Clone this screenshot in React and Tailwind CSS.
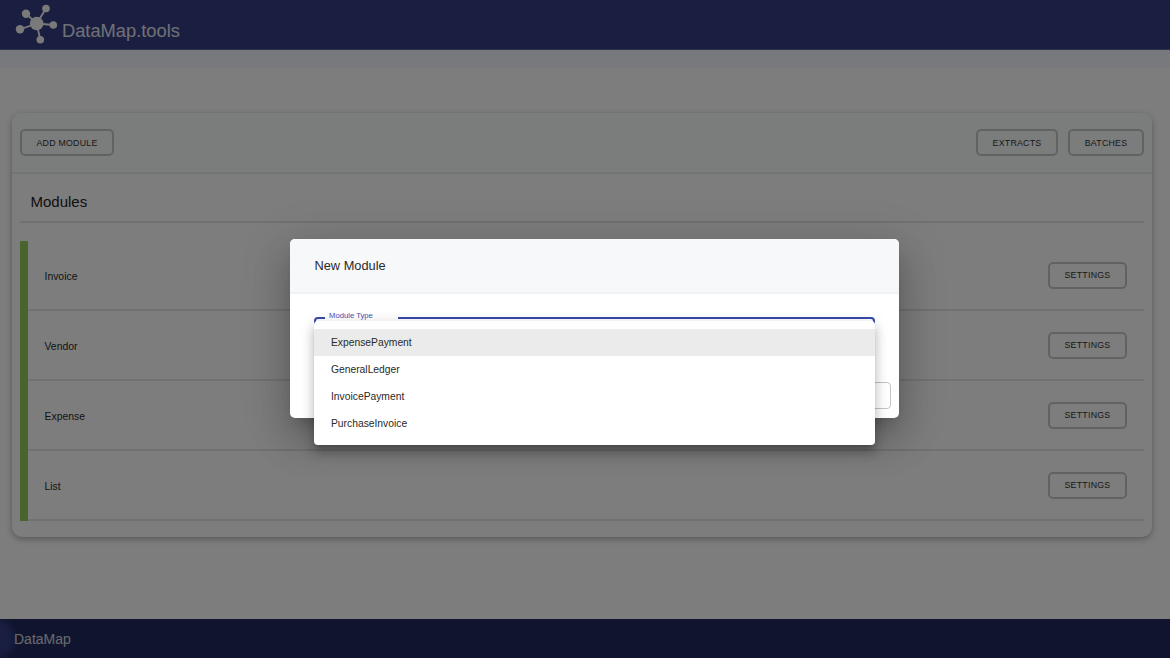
const modules = ['Invoice', 'Vendor', 'Expense', 'List'];
const moduleTypes = ['ExpensePayment', 'GeneralLedger', 'InvoicePayment', 'PurchaseInvoice'];

const outlineButton = "rounded-[5px] border-2 border-[#c4c4c4] pt-px text-[8.8px] leading-none uppercase tracking-[0.25px] text-[#333]";

function Logo() {
    const nodes = [
        [46, 8.5, 3.8],
        [26, 13.7, 4.2],
        [20, 29.3, 4.2],
        [53.3, 25, 3.8],
        [40.3, 39.7, 3.8],
    ];
    return (
        <svg width="62" height="49" viewBox="0 0 62 49" className="shrink-0" fill="#f4f4f4" stroke="#f4f4f4">
            {nodes.map(([x, y, r]) => (
                <g key={x}>
                    <line x1="36.7" y1="23.5" x2={x} y2={y} strokeWidth="1.8" />
                    <circle cx={x} cy={y} r={r} stroke="none" />
                </g>
            ))}
            <circle cx="36.7" cy="23.5" r="6.8" stroke="none" />
        </svg>
    );
}

function ModuleRow({ name }) {
    return (
        <div className="flex h-[70px] items-center justify-between border-b-2 border-[#e3e3e3] pl-[16.5px] pr-[17px]">
            <span className="pt-[4px] text-[10.4px] text-[#2a2a2a]">{name}</span>
            <button className={`${outlineButton} h-[27px] w-[79px]`}>Settings</button>
        </div>
    );
}

export default function App() {
    return (
        <div className="relative flex h-[658px] flex-col overflow-hidden bg-[#fafafa] font-['Liberation_Sans',Arial,sans-serif]">
            <header className="flex h-[50px] shrink-0 items-start border-b border-[#5a6099] bg-[#343d82]">
                <Logo />
                <span className="mt-[20px] text-[18.3px] leading-[21px] text-white/85">DataMap.tools</span>
            </header>
            <div className="h-[18px] shrink-0 bg-[#f0f2f8]" />

            <main className="flex-1 pl-3 pr-[18px] pt-[45px]">
                <section className="h-[424px] rounded-[10px] bg-[#fafafa] shadow-[0_2px_6px_rgba(0,0,0,0.3)]">
                    <div className="flex h-[61px] items-center justify-between rounded-t-[10px] border-b-2 border-[#e6e8e8] bg-[#f6f8f8] pl-2 pr-[8px]">
                        <button className={`${outlineButton} h-[27px] w-[94px]`}>Add Module</button>
                        <div className="flex gap-[10px]">
                            <button className={`${outlineButton} h-[27px] w-[82px]`}>Extracts</button>
                            <button className={`${outlineButton} h-[27px] w-[76px]`}>Batches</button>
                        </div>
                    </div>
                    <div className="px-2">
                        <div className="flex h-[49px] items-center border-b-2 border-[#e3e3e3] pl-[10.5px] pt-[9px] text-[15px] text-[#222]">Modules</div>
                        <div className="mt-[18px] border-l-8 border-[#94c95f]">
                            {modules.map(name => <ModuleRow key={name} name={name} />)}
                        </div>
                    </div>
                </section>
            </main>

            <footer className="relative h-[39px] shrink-0 overflow-hidden bg-[#20295c]">
                <div className="absolute -left-[22px] top-0 h-[39px] w-[36px] rounded-full bg-[#343d82] blur-[3px]" />
                <span className="relative block pl-[14px] text-[14px] leading-[41px] text-white/80">DataMap</span>
            </footer>

            {/* backdrop + dialog */}
            <div className="absolute inset-0 bg-black/50">
                <div className="absolute left-[290px] top-[239px] flex h-[179px] w-[609px] flex-col rounded-[5px] bg-white shadow-[0_11px_15px_-7px_rgba(0,0,0,0.2),0_24px_38px_3px_rgba(0,0,0,0.14),0_9px_46px_8px_rgba(0,0,0,0.12)]">
                    <div className="flex h-[55px] shrink-0 items-center rounded-t-[5px] border-b-2 border-[#f1f2f4] bg-[#f7f8fa] pl-[24.5px] text-[12.8px] text-[#2a2a2a]">New Module</div>
                    <div className="relative mx-6 mt-[23px] h-[48px] rounded-[4px] border-2 border-[#3849ab]">
                        <label className="absolute -top-[8px] left-[9px] w-[73px] bg-white pl-[4px] text-[7.7px] leading-[9px] text-[#3f51b5]">Module Type</label>
                    </div>
                    <div className="mt-[17px] flex justify-end pr-2">
                        <button className="h-[27px] w-[90px] rounded-[4px] border border-[#c4c4c4]" />
                    </div>
                </div>

                <ul className="absolute left-[314px] top-[321px] w-[561px] rounded-[4px] bg-white py-2 shadow-[0_5px_5px_-3px_rgba(0,0,0,0.2),0_8px_10px_1px_rgba(0,0,0,0.14),0_3px_14px_2px_rgba(0,0,0,0.12)]">
                    {moduleTypes.map((t, i) => (
                        <li key={t} className={`flex h-[27px] items-center pl-[17px] text-[10.3px] text-[#2a2a2a] ${i === 0 ? 'bg-[#ebebeb]' : ''}`}>{t}</li>
                    ))}
                </ul>
            </div>
        </div>
    );
}
